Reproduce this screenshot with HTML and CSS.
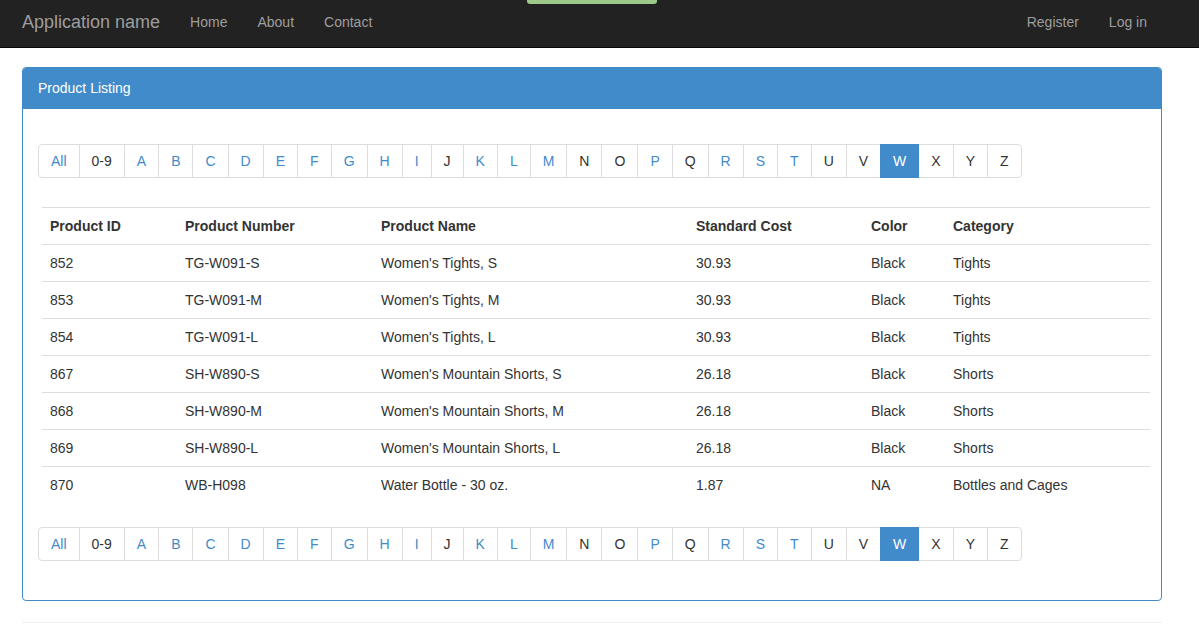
FILE: index.html
```html
<!DOCTYPE html>
<html>
<head>
<meta charset="utf-8">
<title>Product Listing</title>
<link rel="stylesheet" href="styles.css">
</head>
<body>
<div class="top-tab"></div>
<nav class="navbar">
  <div class="nav-inner">
    <a class="brand" href="#">Application name</a>
    <ul class="nav">
      <li><a href="#">Home</a></li>
      <li><a href="#">About</a></li>
      <li><a href="#">Contact</a></li>
    </ul>
    <ul class="nav nav-right">
      <li><a href="#">Register</a></li>
      <li><a href="#">Log in</a></li>
    </ul>
  </div>
</nav>
<main class="container">
  <section class="panel">
    <div class="panel-heading">Product Listing</div>
    <div class="panel-body">
      <ul class="pagination">
        <li><a href="#">All</a></li>
        <li><span>0-9</span></li>
        <li><a href="#">A</a></li>
        <li><a href="#">B</a></li>
        <li><a href="#">C</a></li>
        <li><a href="#">D</a></li>
        <li><a href="#">E</a></li>
        <li><a href="#">F</a></li>
        <li><a href="#">G</a></li>
        <li><a href="#">H</a></li>
        <li><a href="#">I</a></li>
        <li><span>J</span></li>
        <li><a href="#">K</a></li>
        <li><a href="#">L</a></li>
        <li><a href="#">M</a></li>
        <li><span>N</span></li>
        <li><span>O</span></li>
        <li><a href="#">P</a></li>
        <li><span>Q</span></li>
        <li><a href="#">R</a></li>
        <li><a href="#">S</a></li>
        <li><a href="#">T</a></li>
        <li><span>U</span></li>
        <li><span>V</span></li>
        <li class="active"><span>W</span></li>
        <li><span>X</span></li>
        <li><span>Y</span></li>
        <li><span>Z</span></li>
      </ul>
      <table class="table">
        <colgroup>
          <col class="c1"><col class="c2"><col class="c3"><col class="c4"><col class="c5"><col class="c6">
        </colgroup>
        <thead>
          <tr><th>Product ID</th><th>Product Number</th><th>Product Name</th><th>Standard Cost</th><th>Color</th><th>Category</th></tr>
        </thead>
        <tbody>
          <tr><td>852</td><td>TG-W091-S</td><td>Women's Tights, S</td><td>30.93</td><td>Black</td><td>Tights</td></tr>
          <tr><td>853</td><td>TG-W091-M</td><td>Women's Tights, M</td><td>30.93</td><td>Black</td><td>Tights</td></tr>
          <tr><td>854</td><td>TG-W091-L</td><td>Women's Tights, L</td><td>30.93</td><td>Black</td><td>Tights</td></tr>
          <tr><td>867</td><td>SH-W890-S</td><td>Women's Mountain Shorts, S</td><td>26.18</td><td>Black</td><td>Shorts</td></tr>
          <tr><td>868</td><td>SH-W890-M</td><td>Women's Mountain Shorts, M</td><td>26.18</td><td>Black</td><td>Shorts</td></tr>
          <tr><td>869</td><td>SH-W890-L</td><td>Women's Mountain Shorts, L</td><td>26.18</td><td>Black</td><td>Shorts</td></tr>
          <tr><td>870</td><td>WB-H098</td><td>Water Bottle - 30 oz.</td><td>1.87</td><td>NA</td><td>Bottles and Cages</td></tr>
        </tbody>
      </table>
      <ul class="pagination">
        <li><a href="#">All</a></li>
        <li><span>0-9</span></li>
        <li><a href="#">A</a></li>
        <li><a href="#">B</a></li>
        <li><a href="#">C</a></li>
        <li><a href="#">D</a></li>
        <li><a href="#">E</a></li>
        <li><a href="#">F</a></li>
        <li><a href="#">G</a></li>
        <li><a href="#">H</a></li>
        <li><a href="#">I</a></li>
        <li><span>J</span></li>
        <li><a href="#">K</a></li>
        <li><a href="#">L</a></li>
        <li><a href="#">M</a></li>
        <li><span>N</span></li>
        <li><span>O</span></li>
        <li><a href="#">P</a></li>
        <li><span>Q</span></li>
        <li><a href="#">R</a></li>
        <li><a href="#">S</a></li>
        <li><a href="#">T</a></li>
        <li><span>U</span></li>
        <li><span>V</span></li>
        <li class="active"><span>W</span></li>
        <li><span>X</span></li>
        <li><span>Y</span></li>
        <li><span>Z</span></li>
      </ul>
    </div>
  </section>
  <hr class="divider">
</main>
</body>
</html>
```
FILE: styles.css
```css
* { box-sizing: border-box; }
html, body { margin: 0; padding: 0; }
body {
  font-family: "Liberation Sans", Arial, Helvetica, sans-serif;
  font-size: 14px;
  line-height: 20px;
  color: #333;
  background: #fff;
}
a { text-decoration: none; }

.top-tab {
  position: absolute;
  top: 0;
  left: 527px;
  width: 130px;
  height: 4px;
  background: #9cc98a;
  border-radius: 0 0 3px 3px;
  z-index: 5;
}

.navbar {
  background: #222;
  height: 48px;
  border-bottom: 1px solid #080808;
}
.nav-inner {
  width: 1140px;
  margin-left: 22px;
  display: flex;
  align-items: flex-start;
}
.brand {
  font-size: 18px;
  line-height: 20px;
  padding: 12px 15px 0 0;
  color: #9d9d9d;
}
.nav {
  list-style: none;
  margin: 0;
  padding: 0;
  display: flex;
}
.nav-right { margin-left: auto; }
.nav a {
  display: block;
  padding: 12px 15px 0;
  line-height: 20px;
  color: #9d9d9d;
}

.container {
  width: 1140px;
  margin-left: 22px;
  padding-top: 19px;
}

.panel {
  border: 1px solid #428bca;
  border-radius: 4px;
  margin-bottom: 21px;
}
.panel-heading {
  background: #428bca;
  color: #fff;
  font-size: 14px;
  line-height: 20px;
  padding: 10px 15px 11px;
  border-radius: 3px 3px 0 0;
}
.panel-body {
  padding: 15px 15px 19px;
}

.pagination {
  list-style: none;
  margin: 20px 0;
  padding: 0;
  display: flex;
}
.pagination li > a,
.pagination li > span {
  display: block;
  padding: 6px 12px;
  line-height: 20px;
  border: 1px solid #ddd;
  margin-left: -1px;
  background: #fff;
  color: #333;
}
.pagination li > a { color: #428bca; }
.pagination li:first-child > a,
.pagination li:first-child > span {
  margin-left: 0;
  border-radius: 4px 0 0 4px;
}
.pagination li:last-child > a,
.pagination li:last-child > span {
  border-radius: 0 4px 4px 0;
}
.pagination li.active > span {
  background: #428bca;
  border-color: #428bca;
  color: #fff;
  position: relative;
}

.table {
  width: 1108px;
  margin: 29px 0 24px 4px;
  border-collapse: collapse;
  table-layout: fixed;
}
.table .c1 { width: 135px; }
.table .c2 { width: 196px; }
.table .c3 { width: 315px; }
.table .c4 { width: 175px; }
.table .c5 { width: 82px; }
.table .c6 { width: 205px; }
.table th,
.table td {
  text-align: left;
  padding: 8px;
  line-height: 20px;
  border-top: 1px solid #ddd;
  vertical-align: top;
  white-space: nowrap;
}
.table th { font-weight: bold; }

.divider {
  border: 0;
  border-top: 1px solid #eee;
  margin: 0;
}
```
